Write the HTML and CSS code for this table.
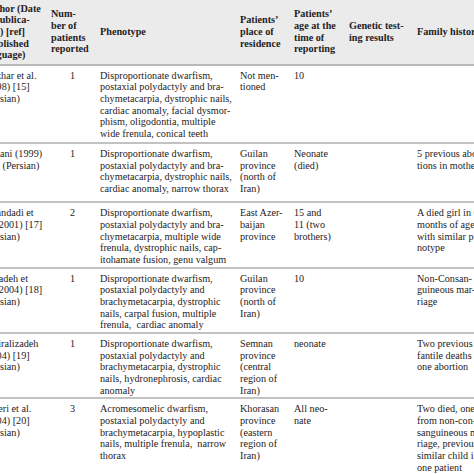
FILE: index.html
```html
<!DOCTYPE html>
<html>
<head>
<meta charset="utf-8">
<link rel="stylesheet" href="styles.css">
</head>
<body>
<table class="cases">
  <colgroup>
    <col class="c-author">
    <col class="c-num">
    <col class="c-pheno">
    <col class="c-place">
    <col class="c-age">
    <col class="c-gen">
    <col class="c-fam">
  </colgroup>
  <thead>
    <tr>
      <th>Author (Date<br>of publica-<br>tion) [ref]<br>(published<br>language)</th>
      <th>Num-<br>ber of<br>patients<br>reported</th>
      <th>Phenotype</th>
      <th>Patients’<br>place of<br>residence</th>
      <th>Patients’<br>age at the<br>time of<br>reporting</th>
      <th>Genetic test-<br>ing results</th>
      <th>Family history</th>
    </tr>
  </thead>
  <tbody>
    <tr class="row-six">
      <td>Mazhar et al.<br>(1998) [15]<br>(Persian)</td>
      <td class="num">1</td>
      <td>Disproportionate dwarfism,<br>postaxial polydactyly and bra-<br>chymetacarpia, dystrophic nails,<br>cardiac anomaly, facial dysmor-<br>phism, oligodontia, multiple<br>wide frenula, conical teeth</td>
      <td>Not men-<br>tioned</td>
      <td>10</td>
      <td></td>
      <td></td>
    </tr>
    <tr class="row-four">
      <td>Rohani (1999)<br>[16]  (Persian)</td>
      <td class="num">1</td>
      <td>Disproportionate dwarfism,<br>postaxial polydactyly and bra-<br>chymetacarpia, dystrophic nails,<br>cardiac anomaly, narrow thorax</td>
      <td>Guilan<br>province<br>(north of<br>Iran)</td>
      <td>Neonate<br>(died)</td>
      <td></td>
      <td>5 previous abor-<br>tions in mother</td>
    </tr>
    <tr>
      <td>Farandadi et<br>al. (2001) [17]<br>(Persian)</td>
      <td class="num">2</td>
      <td>Disproportionate dwarfism,<br>postaxial polydactyly and bra-<br>chymetacarpia, multiple wide<br>frenula, dystrophic nails, cap-<br>itohamate fusion, genu valgum</td>
      <td>East Azer-<br>baijan<br>province</td>
      <td>15 and<br>11 (two<br>brothers)</td>
      <td></td>
      <td>A died girl in 6<br>months of age<br>with similar phe-<br>notype</td>
    </tr>
    <tr>
      <td>Razadeh et<br>al. (2004) [18]<br>(Persian)</td>
      <td class="num">1</td>
      <td>Disproportionate dwarfism,<br>postaxial polydactyly and<br>brachymetacarpia, dystrophic<br>nails, carpal fusion, multiple<br>frenula,&nbsp; cardiac anomaly</td>
      <td>Guilan<br>province<br>(north of<br>Iran)</td>
      <td>10</td>
      <td></td>
      <td>Non-Consan-<br>guineous mar-<br>riage</td>
    </tr>
    <tr>
      <td>Amiralizadeh<br>(2004) [19]<br>(Persian)</td>
      <td class="num">1</td>
      <td>Disproportionate dwarfism,<br>postaxial polydactyly and<br>brachymetacarpia, dystrophic<br>nails, hydronephrosis, cardiac<br>anomaly</td>
      <td>Semnan<br>province<br>(central<br>region of<br>Iran)</td>
      <td>neonate</td>
      <td></td>
      <td>Two previous in-<br>fantile deaths and<br>one abortion</td>
    </tr>
    <tr>
      <td>Saberi et al.<br>(2004) [20]<br>(Persian)</td>
      <td class="num">3</td>
      <td>Acromesomelic dwarfism,<br>postaxial polydactyly and<br>brachymetacarpia, hypoplastic<br>nails, multiple frenula,&nbsp; narrow<br>thorax</td>
      <td>Khorasan<br>province<br>(eastern<br>region of<br>Iran)</td>
      <td>All neo-<br>nate</td>
      <td></td>
      <td>Two died, one<br>from non-con-<br>sanguineous mar-<br>riage, previous<br>similar child in<br>one patient</td>
    </tr>
  </tbody>
</table>
</body>
</html>
```

FILE: styles.css
```css
html, body {
  margin: 0;
  padding: 0;
  background: #ffffff;
  overflow: hidden;
}

.cases {
  margin-left: -20px;
  width: 540px;
  table-layout: fixed;
  border-collapse: collapse;
  font-family: "Liberation Serif", "Times New Roman", serif;
  font-size: 10.2px;
  line-height: 11.67px;
  color: #262223;
}

.c-author { width: 68px; }
.c-num { width: 49px; }
.c-pheno { width: 140px; }
.c-place { width: 54px; }
.c-age { width: 55px; }
.c-gen { width: 68px; }
.c-fam { width: 106px; }

.cases th,
.cases td {
  white-space: nowrap;
  overflow: hidden;
  text-align: left;
  padding: 4px 3px 1px 3px;
}

.cases thead th {
  background: #ebebeb;
  font-weight: bold;
  vertical-align: middle;
  padding-top: 2.5px;
  padding-bottom: 2.5px;
  height: 58.5px;
  border-bottom: 2px solid #b9b9b9;
}

.cases tbody td {
  vertical-align: top;
  border-bottom: 2px solid #c2c2c2;
}

.cases tbody td.num {
  text-align: center;
}

.cases tbody tr.row-six td {
  padding-bottom: 2.5px;
}

.cases tbody tr.row-four td {
  padding-bottom: 6.5px;
}
```
